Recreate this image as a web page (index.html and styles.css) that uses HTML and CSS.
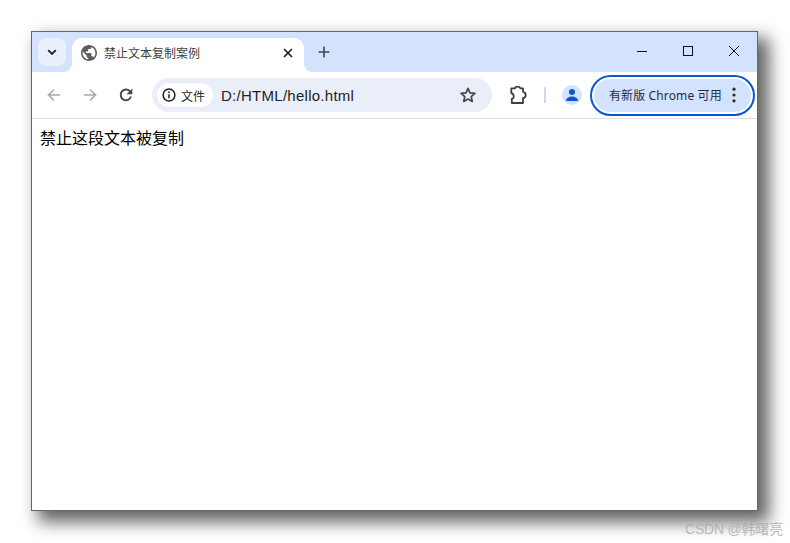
FILE: index.html
```html
<!DOCTYPE html>
<html lang="zh">
<head>
<meta charset="utf-8">
<title>禁止文本复制案例</title>
<link rel="stylesheet" href="styles.css">
</head>
<body>
<div class="window">
  <div class="tabstrip">
    <button class="tab-search"><svg width="12" height="12" viewBox="0 0 12 12"><path d="M2.2 4.2 6 8l3.8-3.8" fill="none" stroke="#1f1f1f" stroke-width="1.8"/></svg></button>
    <div class="tab">
      <svg class="globe" width="16" height="16" viewBox="2 2 20 20"><path fill="#5b5e63" d="M12 2C6.48 2 2 6.48 2 12s4.48 10 10 10 10-4.48 10-10S17.52 2 12 2zm-1 17.930c-3.950-.49-7-3.850-7-7.930 0-.62.08-1.210.21-1.790L9 15v1c0 1.100.9 2 2 2v1.930zm6.900-2.540c-.26-.81-1-1.390-1.900-1.390h-1v-3c0-.55-.45-1-1-1H8v-2h2c.55 0 1-.45 1-1V7h2c1.100 0 2-.9 2-2v-.41c2.930 1.190 5 4.060 5 7.410 0 2.080-.8 3.970-2.100 5.390z"/></svg>
      <span class="tab-title">禁止文本复制案例</span>
      <svg class="tab-close" width="10" height="10" viewBox="0 0 10 10"><path d="M1 1l8 8M9 1 1 9" stroke="#1f1f1f" stroke-width="1.700"/></svg>
    </div>
    <button class="new-tab"><svg width="12" height="12" viewBox="0 0 12 12"><path d="M6 .5v11M.5 6h11" stroke="#444746" stroke-width="1.600"/></svg></button>
    <div class="caption">
      <svg width="46" height="16" viewBox="0 0 46 16"><path d="M18 8.500h10" stroke="#111" stroke-width="1"/></svg>
      <svg width="46" height="16" viewBox="0 0 46 16"><rect x="18.500" y="3.500" width="9" height="9" fill="none" stroke="#111" stroke-width="1"/></svg>
      <svg width="46" height="16" viewBox="0 0 46 16"><path d="M18 3l10 10M28 3 18 13" stroke="#111" stroke-width="1"/></svg>
    </div>
  </div>
  <div class="toolbar">
    <svg class="nav" width="16" height="16" viewBox="0 0 16 16"><path d="M14 8H2.500M8 2.500 2.500 8 8 13.500" fill="none" stroke="#a8abae" stroke-width="1.700"/></svg>
    <svg class="nav" width="16" height="16" viewBox="0 0 16 16"><path d="M2 8h11.500M8 2.500 13.500 8 8 13.500" fill="none" stroke="#a8abae" stroke-width="1.700"/></svg>
    <svg class="nav" width="16" height="16" viewBox="0 0 16 16"><path d="M13 9.500A5.300 5.300 0 1 1 11.800 4.200L13.500 6" fill="none" stroke="#444746" stroke-width="1.900"/><path d="M14.300 1.500v5.800H8.500z" fill="#444746"/></svg>
    <div class="omnibox">
      <div class="chip">
        <svg width="14" height="14" viewBox="0 0 14 14"><circle cx="7" cy="7" r="5.900" fill="none" stroke="#1f1f1f" stroke-width="1.500"/><path d="M7 6.200v4" stroke="#1f1f1f" stroke-width="1.500"/><circle cx="7" cy="4.200" r=".9" fill="#1f1f1f"/></svg>
        <span>文件</span>
      </div>
      <span class="url">D:/HTML/hello.html</span>
      <svg class="star" width="18" height="18" viewBox="0 0 18 18"><path d="M9 2.300l2 4.500 4.900.5-3.700 3.300 1.100 4.800L9 13l-4.300 2.400 1.100-4.800-3.700-3.300 4.900-.5z" fill="none" stroke="#444746" stroke-width="1.700" stroke-linejoin="round"/></svg>
    </div>
    <svg class="puzzle" width="18" height="18" viewBox="0 0 18 18"><path d="M2.300 2.300h3.700c.3-1 1.200-1.700 2.600-1.700s2.400.7 2.700 1.700H14v3.500c1.500.2 2.700 1 2.700 3.200s-1.200 3-2.700 3.200v4.800H2.800v-4.100c1.200-.3 2-1.200 2-2.600s-.9-2.700-2.500-3.200z" fill="none" stroke="#3c4043" stroke-width="1.800" stroke-linejoin="round"/></svg>
    <span class="divider"></span>
    <div class="avatar"><svg width="14" height="14" viewBox="0 0 14 14"><circle cx="7" cy="3.900" r="3" fill="#0b57d0"/><path d="M1 13c0-3 2.800-4.500 6-4.500s6 1.500 6 4.500z" fill="#0b57d0"/></svg></div>
    <div class="update">
      <span class="update-label">有新版 Chrome 可用</span>
      <svg width="4" height="16" viewBox="0 0 4 16"><circle cx="2" cy="2.200" r="1.600" fill="#1f2a44"/><circle cx="2" cy="8" r="1.600" fill="#1f2a44"/><circle cx="2" cy="13.800" r="1.600" fill="#1f2a44"/></svg>
    </div>
  </div>
  <div class="content">禁止这段文本被复制</div>
</div>
<div class="watermark">CSDN @韩曙亮</div>
</body>
</html>
```
FILE: styles.css
```css
* { box-sizing: border-box; }
html, body { height: 100%; }
body {
  margin: 0;
  padding: 31px 0 0 31px;
  background: #fff;
  overflow: hidden;
  font-family: "Liberation Sans", "Noto Sans CJK SC", sans-serif;
}
button { border: 0; padding: 0; background: none; }
.window {
  width: 727px;
  height: 480px;
  border: 1px solid #666;
  background: #fff;
  box-shadow: 9px 9px 16px 2px rgba(0, 0, 0, .62);
  display: flex;
  flex-direction: column;
}
.tabstrip {
  height: 40px;
  flex: none;
  background: #d3e3fd;
  display: flex;
  align-items: flex-end;
  padding-left: 6px;
}
.tab-search {
  width: 28px;
  height: 28px;
  margin-bottom: 6px;
  border-radius: 8px;
  background: #e8f0fd;
  display: flex;
  align-items: center;
  justify-content: center;
}
.tab {
  position: relative;
  width: 232px;
  height: 34px;
  margin-left: 6px;
  background: #fff;
  border-radius: 10px 10px 0 0;
  display: flex;
  align-items: center;
  padding: 0 11px 5px 9px;
}
.tab::before, .tab::after {
  content: "";
  position: absolute;
  bottom: 0;
  width: 8px;
  height: 8px;
  background: radial-gradient(circle at var(--cx) 0, #d3e3fd 7.500px, #fff 8px);
}
.tab::before { left: -8px; --cx: 0; }
.tab::after { right: -8px; --cx: 100%; }
.globe { flex: none; }
.tab-title {
  flex: 1;
  margin-left: 7px;
  padding-top: 2px;
  font-size: 12px;
  line-height: 16px;
  color: #3c3f43;
}
.tab-close { flex: none; }
.new-tab {
  width: 12px;
  height: 12px;
  margin: 0 0 14px 14px;
  display: flex;
}
.caption {
  margin-left: auto;
  align-self: flex-start;
  margin-top: 11px;
  display: flex;
}
.caption svg { display: block; }
.toolbar {
  height: 47px;
  flex: none;
  background: #fff;
  border-bottom: 1px solid #dedfe1;
  border-radius: 8px 8px 0 0;
  display: flex;
  align-items: center;
  padding: 0 3px 0 14px;
}
.nav { flex: none; margin-right: 20px; }
.nav:nth-child(3) { margin-right: 18px; }
.omnibox {
  width: 340px;
  height: 34px;
  flex: none;
  background: #e9eef8;
  border-radius: 17px;
  display: flex;
  align-items: center;
  padding: 0 15px 0 5px;
}
.chip {
  height: 24px;
  width: 56px;
  flex: none;
  background: #fff;
  border-radius: 12px;
  display: flex;
  align-items: center;
  gap: 5px;
  padding-left: 5px;
  font-size: 12px;
  color: #1f1f1f;
}
.url {
  flex: 1;
  margin-left: 8px;
  font-size: 15px;
  letter-spacing: .27px;
  color: #1f1f1f;
}
.star { flex: none; }
.puzzle { flex: none; margin-left: 17px; }
.divider {
  width: 2px;
  height: 16px;
  margin-left: 17px;
  background: #c7daf7;
  flex: none;
}
.avatar {
  width: 20px;
  height: 20px;
  margin-left: 16px;
  flex: none;
  border-radius: 50%;
  background: #d3e3fd;
  display: flex;
  align-items: center;
  justify-content: center;
}
.update {
  width: 165px;
  height: 41px;
  margin-left: 8px;
  flex: none;
  border: 2px solid #0b57d0;
  border-radius: 21px;
  background: #d3e3fd;
  box-shadow: inset 0 0 0 2px #fff;
  display: flex;
  align-items: center;
  padding-left: 17px;
}
.update-label {
  width: 123px;
  flex: none;
  font-size: 12px;
  letter-spacing: .12px;
  font-family: "Noto Sans", "Noto Sans CJK SC", sans-serif;
  color: #1f2a44;
  white-space: nowrap;
}
.content {
  flex: 1;
  padding: 10px 0 0 8px;
  font-size: 16px;
  line-height: 20px;
  color: #000;
}
.watermark {
  position: absolute;
  left: 685px;
  top: 521px;
  font-size: 14px;
  letter-spacing: -.2px;
  line-height: 17px;
  color: rgba(170, 170, 170, .8);
  white-space: nowrap;
}
```
